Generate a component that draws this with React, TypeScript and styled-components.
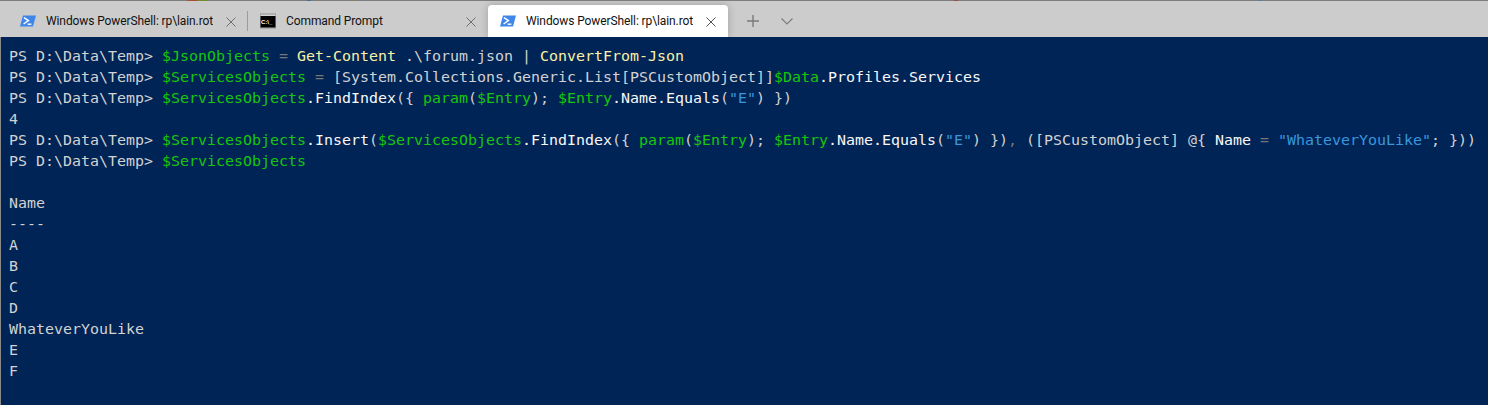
import styled, { createGlobalStyle } from "styled-components";

const GlobalStyle = createGlobalStyle`
  html, body {
    margin: 0;
    padding: 0;
    background: #012456;
  }
`;

const Window = styled.div`
  display: flex;
  flex-direction: column;
  width: 1488px;
  height: 405px;
  overflow: hidden;
`;

const TopEdge = styled.div`
  display: flex;
  height: 1px;
  background: #7c7c7c;
  flex: none;
`;

const EdgeGap = styled.div<{ $width: number; $color?: string }>`
  width: ${({ $width }) => $width}px;
  background: ${({ $color }) => $color ?? "transparent"};
`;

const TabBar = styled.div`
  display: flex;
  align-items: flex-end;
  height: 36px;
  flex: none;
  padding-left: 8px;
  background: #cccccc;
  overflow: hidden;
`;

const Tab = styled.div<{ $active?: boolean }>`
  display: flex;
  align-items: center;
  width: 240px;
  height: 32px;
  padding: 0 10px 0 12px;
  box-sizing: border-box;
  border-radius: 4px 4px 0 0;
  position: relative;
  background: ${({ $active }) => ($active ? "#ffffff" : "transparent")};
  box-shadow: ${({ $active }) =>
    $active ? "0 0 8px rgba(0, 0, 0, 0.22)" : "none"};
`;

const TabIcon = styled.svg`
  width: 16px;
  height: 16px;
  flex: none;
  margin-right: 10px;
`;

const TabTitle = styled.span`
  flex: 1;
  overflow: hidden;
  white-space: nowrap;
  font-family: Roboto, sans-serif;
  font-size: 12px;
  letter-spacing: -0.1px;
  line-height: 18px;
  color: #111111;
`;

const CloseIcon = styled.svg`
  width: 10px;
  height: 10px;
  flex: none;
  margin: 1px 2px 0 13px;
`;

const Divider = styled.div`
  position: absolute;
  right: 0;
  top: 6px;
  width: 1px;
  height: 20px;
  background: #9c9c9c;
`;

const NewTab = styled.svg`
  width: 14px;
  height: 14px;
  flex: none;
  margin: 0 0 9px 18px;
`;

const Chevron = styled.svg`
  width: 12px;
  height: 7px;
  flex: none;
  margin: 0 0 12px 21px;
`;

const Terminal = styled.div`
  flex: 1;
  padding: 9px 0 0 8px;
  background: #012456;
  border-left: 1px solid #8a8a8a;
  font-family: "DejaVu Sans Mono", monospace;
  font-size: 14.95px;
  letter-spacing: 0.006px;
  line-height: 21px;
  color: #cccccc;
`;

const Line = styled.div`
  height: 21px;
  white-space: pre;
`;

type Tone = "plain" | "var" | "cmd" | "white" | "op" | "str";

const toneColors: Record<Tone, string> = {
  plain: "#d2d2d2",
  var: "#16c60c",
  cmd: "#f9f1a5",
  white: "#f8f8f8",
  op: "#767676",
  str: "#3a96dd",
};

const Token = styled.span<{ $tone: Tone }>`
  color: ${({ $tone }) => toneColors[$tone]};
`;

const prompt: [Tone, string] = ["plain", "PS D:\\Data\\Temp> "];
const services: [Tone, string] = ["var", "$ServicesObjects"];

const findIndex: [Tone, string][] = [
  services,
  ["white", ".FindIndex"],
  ["plain", "({ "],
  ["var", "param"],
  ["plain", "("],
  ["var", "$Entry"],
  ["plain", "); "],
  ["var", "$Entry"],
  ["white", ".Name.Equals"],
  ["plain", "("],
  ["str", '"E"'],
  ["plain", ") })"],
];

const lines: [Tone, string][][] = [
  [
    prompt,
    ["var", "$JsonObjects"],
    ["op", " = "],
    ["cmd", "Get-Content"],
    ["plain", " .\\forum.json | "],
    ["cmd", "ConvertFrom-Json"],
  ],
  [
    prompt,
    services,
    ["op", " = "],
    ["plain", "[System.Collections.Generic.List[PSCustomObject]]"],
    ["var", "$Data"],
    ["white", ".Profiles.Services"],
  ],
  [prompt, ...findIndex],
  [["plain", "4"]],
  [
    prompt,
    services,
    ["white", ".Insert"],
    ["plain", "("],
    ...findIndex,
    ["op", ", "],
    ["plain", "([PSCustomObject] @{ "],
    ["white", "Name"],
    ["op", " = "],
    ["str", '"WhateverYouLike"'],
    ["plain", "; }))"],
  ],
  [prompt, services],
  [],
  [["plain", "Name"]],
  [["plain", "----"]],
  [["plain", "A"]],
  [["plain", "B"]],
  [["plain", "C"]],
  [["plain", "D"]],
  [["plain", "WhateverYouLike"]],
  [["plain", "E"]],
  [["plain", "F"]],
];

// the sliver of whatever window sits behind this one
const edgeBits: [number, string | undefined][] = [
  [187, undefined],
  [10, "#a5502f"],
  [10, "#6f8a2c"],
  [100, undefined],
  [4, "#3f6f9a"],
  [40, undefined],
  [3, "#9a7b4f"],
  [600, undefined],
  [4, "#a04a4a"],
  [300, undefined],
  [3, "#5a7a9a"],
];

const PowerShellIcon = () => (
  <TabIcon viewBox="0 0 16 16">
    <path d="M3 2.5H16L13 13.5H0Z" fill="#3f86ea" />
    <path d="M4 4.6L8.4 7.6L3.6 11" fill="none" stroke="#fff" strokeWidth="1.5" />
    <path d="M7.6 11.2H11.4" stroke="#fff" strokeWidth="1.4" />
  </TabIcon>
);

const CmdIcon = () => (
  <TabIcon viewBox="0 0 16 16">
    <rect x="0" y="1" width="16" height="14" fill="#d4d4d4" stroke="#6a6a6a" strokeWidth="0.6" />
    <rect x="0.5" y="3" width="15" height="11.5" fill="#000000" />
    <text x="1" y="11" fontFamily="Liberation Sans" fontSize="6" fontWeight="700" fill="#fff">
      C:\_
    </text>
  </TabIcon>
);

const Close = ({ active }: { active?: boolean }) => (
  <CloseIcon viewBox="0 0 10 10">
    <path
      d="M0.5 0.5L9.5 9.5M9.5 0.5L0.5 9.5"
      stroke={active ? "#555555" : "#6e6e6e"}
      strokeWidth="1"
    />
  </CloseIcon>
);

export default function App() {
  return (
    <Window>
      <GlobalStyle />
      <TopEdge>
        {edgeBits.map(([width, color], i) => (
          <EdgeGap key={i} $width={width} $color={color} />
        ))}
      </TopEdge>
      <TabBar>
        <Tab>
          <PowerShellIcon />
          <TabTitle>Windows PowerShell: rp\lain.rot</TabTitle>
          <Close />
          <Divider />
        </Tab>
        <Tab>
          <CmdIcon />
          <TabTitle>Command Prompt</TabTitle>
          <Close />
        </Tab>
        <Tab $active>
          <PowerShellIcon />
          <TabTitle>Windows PowerShell: rp\lain.rot</TabTitle>
          <Close active />
        </Tab>
        <NewTab viewBox="0 0 14 14">
          <path d="M7 1V13M1 7H13" stroke="#7a7a7a" strokeWidth="1.4" />
        </NewTab>
        <Chevron viewBox="0 0 12 7">
          <path d="M0.5 0.5L6 6L11.5 0.5" fill="none" stroke="#7a7a7a" strokeWidth="1.1" />
        </Chevron>
      </TabBar>
      <Terminal>
        {lines.map((tokens, i) => (
          <Line key={i}>
            {tokens.map(([tone, text], j) => (
              <Token key={j} $tone={tone}>
                {text}
              </Token>
            ))}
          </Line>
        ))}
      </Terminal>
    </Window>
  );
}
